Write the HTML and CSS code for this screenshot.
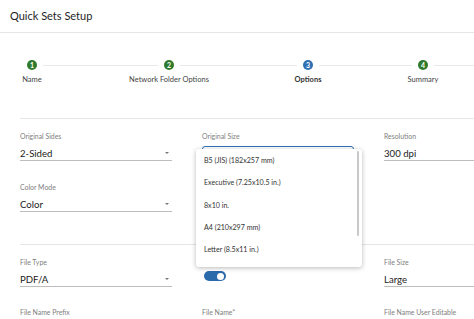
FILE: index.html
```html
<!DOCTYPE html>
<html lang="en">

<head>
    <meta charset="UTF-8">
    <meta name="viewport" content="width=device-width, initial-scale=1.0">
    <title>Quick Sets Setup</title>
    <link rel="stylesheet" href="styles.css">
</head>

<body>
    <div class="page">
        <header class="top-bar">
            <h1 class="title">Quick Sets Setup</h1>
        </header>

        <ol class="stepper">
            <li class="step"><span class="step-dot">1</span><span class="step-label">Name</span></li>
            <li class="step"><span class="step-dot">2</span><span class="step-label">Network Folder Options</span></li>
            <li class="step active"><span class="step-dot">3</span><span class="step-label">Options</span></li>
            <li class="step"><span class="step-dot">4</span><span class="step-label">Summary</span></li>
        </ol>

        <section class="form-section first">
            <div class="field-grid">
                <div class="field">
                    <label class="field-label">Original Sides</label>
                    <div class="field-value">2-Sided<span class="arrow"></span></div>
                </div>
                <div class="field open">
                    <label class="field-label">Original Size</label>
                    <div class="select-box"></div>
                    <ul class="dropdown">
                        <li>B5 (JIS) (182x257 mm)</li>
                        <li>Executive (7.25x10.5 in.)</li>
                        <li>8x10 in.</li>
                        <li>A4 (210x297 mm)</li>
                        <li>Letter (8.5x11 in.)</li>
                    </ul>
                    <span class="scrollbar"></span>
                </div>
                <div class="field">
                    <label class="field-label">Resolution</label>
                    <div class="field-value">300 dpi</div>
                </div>
                <div class="field">
                    <label class="field-label">Color Mode</label>
                    <div class="field-value">Color<span class="arrow"></span></div>
                </div>
            </div>
        </section>

        <section class="form-section">
            <div class="field-grid">
                <div class="field">
                    <label class="field-label">File Type</label>
                    <div class="field-value">PDF/A<span class="arrow"></span></div>
                </div>
                <div class="field">
                    <label class="field-label">&nbsp;</label>
                    <span class="toggle on"></span>
                </div>
                <div class="field">
                    <label class="field-label">File Size</label>
                    <div class="field-value">Large</div>
                </div>
                <div class="field">
                    <label class="field-label">File Name Prefix</label>
                </div>
                <div class="field">
                    <label class="field-label">File Name*</label>
                </div>
                <div class="field">
                    <label class="field-label">File Name User Editable</label>
                    <span class="toggle on tight"></span>
                </div>
            </div>
        </section>
    </div>
</body>

</html>
```

FILE: styles.css
```css
body {
    margin: 0;
    overflow: hidden;
    background-color: #fff;
    font-family: Lato, "Liberation Sans", Arial, sans-serif;
    color: #222;
}

.page {
    width: 580px;
}

.top-bar {
    height: 32px;
    border-bottom: 1px solid #e6e6e6;
    display: flex;
    align-items: center;
    padding-left: 10px;
}

.title {
    margin: 0;
    font-size: 11px;
    font-weight: 400;
    color: #1e1e1e;
    margin-top: -2px;
}

/* stepper */
.stepper {
    position: relative;
    list-style: none;
    margin: 0;
    padding: 27px 0 33px 0;
    display: grid;
    grid-template-columns: 64px 210px 68px 162px;
}

.stepper::before {
    content: "";
    position: absolute;
    left: 32px;
    right: 0;
    top: 32px;
    height: 1px;
    background-color: #e9e9e9;
}

.step {
    display: flex;
    flex-direction: column;
    align-items: center;
    gap: 5px;
}

.step-dot {
    position: relative;
    width: 10px;
    height: 10px;
    border-radius: 50%;
    background-color: #2f7a2c;
    color: #fff;
    font-size: 7px;
    font-weight: 700;
    line-height: 10px;
    text-align: center;
    box-shadow: 0 0 0 6px #fff;
}

.step.active .step-dot {
    background-color: #2f70b3;
}

.step-label {
    font-size: 7.5px;
    line-height: 10px;
    color: #444;
    white-space: nowrap;
}

.step.active .step-label {
    font-weight: 700;
    color: #333;
}

/* form */
.form-section {
    margin-left: 20px;
    border-top: 1px solid #e6e6e6;
    padding: 12px 0 13px 0;
}

.form-section.first {
    padding-bottom: 12px;
}

.field-grid {
    display: grid;
    grid-template-columns: 152px 152px 152px;
    column-gap: 30px;
}

.field {
    position: relative;
    margin-bottom: 20px;
}

.field-label {
    display: block;
    font-size: 6.9px;
    line-height: 10px;
    color: #808080;
    white-space: nowrap;
}

.field-value {
    display: flex;
    justify-content: space-between;
    align-items: center;
    margin-top: 5px;
    height: 14px;
    font-size: 9.6px;
    color: #222;
    border-bottom: 1px solid #bdbdbd;
    padding-right: 3px;
}

.arrow {
    width: 0;
    height: 0;
    border-left: 2px solid transparent;
    border-right: 2px solid transparent;
    border-top: 2px solid #777;
}

/* open select */
.select-box {
    margin-top: 5px;
    height: 14px;
    border: 1px solid #2f70b3;
    border-radius: 3px;
}

.dropdown {
    position: absolute;
    left: -6px;
    top: 18px;
    width: 166px;
    height: 118px;
    margin: 0;
    padding: 1px 0 0 0;
    box-sizing: border-box;
    list-style: none;
    background-color: #fff;
    border-radius: 3px;
    box-shadow: 0 1px 5px rgba(0, 0, 0, 0.28);
    z-index: 2;
}

.dropdown li {
    height: 22.3px;
    line-height: 22px;
    padding-left: 8px;
    font-size: 7.1px;
    color: #333;
}

.scrollbar {
    position: absolute;
    left: 155px;
    top: 20px;
    width: 2px;
    height: 85px;
    border-radius: 1px;
    background-color: #c8c8c8;
    z-index: 3;
}

.toggle {
    display: block;
    position: relative;
    width: 22px;
    height: 10px;
    margin: 4px 0 0 2px;
    border-radius: 5px;
    background-color: #2b6aaa;
}

.toggle::after {
    content: "";
    position: absolute;
    right: 2px;
    top: 1.5px;
    width: 7px;
    height: 7px;
    border-radius: 50%;
    background-color: #fff;
}

.toggle.tight {
    margin-top: 2px;
    margin-left: 6px;
}
```
